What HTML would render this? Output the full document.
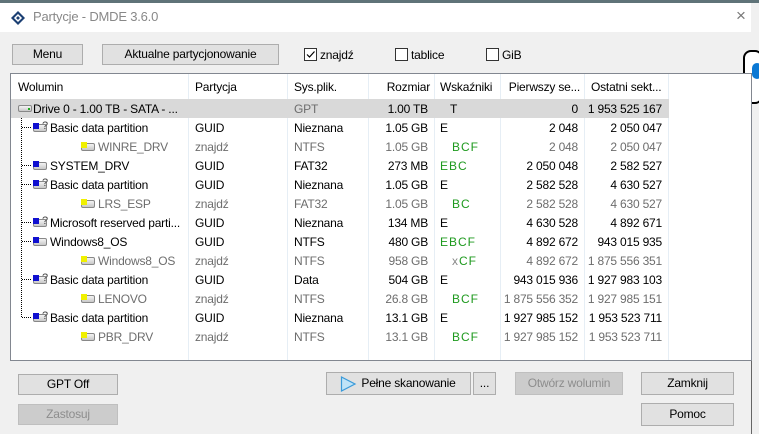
<!DOCTYPE html>
<html><head><meta charset="utf-8"><style>
*{margin:0;padding:0;box-sizing:border-box}
body{width:759px;height:434px;overflow:hidden;background:#f0f0f0;font-family:"Liberation Sans",sans-serif;font-size:12px;color:#000;position:relative;letter-spacing:-0.2px}
.a{position:absolute;white-space:nowrap}
.btn{position:absolute;background:#e1e1e1;border:1px solid #adadad;text-align:center;font-size:12px}
.dis{color:#8d8d8d;background:#cccccc;border-color:#bfbfbf}
.cb{position:absolute;width:13px;height:13px;border:1px solid #333;background:#fff}
.col{position:absolute;top:74px;height:286px;border-right:1px solid #e6eef5}
.g{color:#6d6d6d}
.gr{color:#1e9a1e;letter-spacing:1px}
.ic{position:absolute;width:14px;height:8px;border:1px solid #888;border-radius:2px;background:linear-gradient(#f4f4f4,#c8c8c8)}
.sq{position:absolute;width:6px;height:6px}
</style></head><body>
<div class="a" style="left:0;top:0;width:759px;height:3px;background:#5f7378"></div>
<div class="a" style="left:0;top:3px;width:751px;height:29px;background:#fff"></div>
<svg class="a" style="left:10px;top:10px" width="16" height="16"><rect x="0" y="0" width="16" height="16" fill="#fff"/><path d="M8 1 L15 8 L8 15 L1 8Z" fill="#1b3f73"/><path d="M5 8 L8 5 L11 8 L8 11Z" fill="none" stroke="#fff" stroke-width="1.5"/></svg>
<div class="a" style="left:33px;top:9px;font-size:13px;color:#888">Partycje - DMDE 3.6.0</div>
<div class="a" style="left:736px;top:6px;font-size:17px;color:#777">×</div>
<div class="a" style="left:751px;top:32px;width:8px;height:402px;background:#f0f0f0"></div>
<div class="a" style="left:751px;top:104px;width:1px;height:330px;background:#666"></div>
<div class="a" style="left:743px;top:50px;width:20px;height:54px;border:2px solid #000;border-radius:8px;background:#fff"></div>
<div class="a" style="left:752px;top:63px;width:10px;height:16px;border-radius:8px;background:#0a78d4"></div>

<div class="btn" style="left:12px;top:44px;width:71px;height:21px;line-height:19px">Menu</div>
<div class="btn" style="left:102px;top:44px;width:177px;height:21px;line-height:19px">Aktualne partycjonowanie</div>
<div class="cb" style="left:304px;top:48px"></div>
<svg class="a" style="left:305px;top:49px" width="11" height="11"><path d="M2 5.5 L4.5 8 L9.5 2.5" stroke="#000" fill="none" stroke-width="1.2"/></svg>
<div class="a" style="left:320px;top:48px">znajdź</div>
<div class="cb" style="left:395px;top:48px"></div>
<div class="a" style="left:411px;top:48px">tablice</div>
<div class="cb" style="left:486px;top:48px"></div>
<div class="a" style="left:502px;top:48px">GiB</div>

<div class="a" style="left:10px;top:73px;width:742px;height:288px;background:#fff;border:1px solid #828790"></div>
<div class="col" style="left:11px;width:178px"></div>
<div class="col" style="left:189px;width:99px"></div>
<div class="col" style="left:288px;width:81px"></div>
<div class="col" style="left:369px;width:66px"></div>
<div class="col" style="left:435px;width:66px"></div>
<div class="col" style="left:501px;width:84px"></div>
<div class="col" style="left:585px;width:84px"></div>
<div class="a" style="left:11px;top:99px;width:658px;height:19px;background:#d9d9d9"></div>
<div class="a" style="left:21px;top:118px;height:199px;border-left:1px dotted #000"></div>

<div id="tbl"></div>
<script>
var H=[["Wolumin",18,0],["Partycja",195,0],["Sys.plik.",294,0],["Rozmiar",430,1],["Wskaźniki",440,0],["Pierwszy se...",580,1],["Ostatni sekt...",591,0]];
var s="";
H.forEach(function(h){s+='<div class="a" style="'+(h[2]?'right:'+(759-h[1])+'px':'left:'+h[1]+'px')+';top:80px">'+h[0]+'</div>'});
var R=[
[0,"Drive 0 - 1.00 TB - SATA - ...","","GPT","1.00 TB","T","0","1 953 525 167"],
[1,"Basic data partition","GUID","Nieznana","1.05 GB","E","2 048","2 050 047",1],
[2,"WINRE_DRV","znajdź","NTFS","1.05 GB","BCF","2 048","2 050 047"],
[1,"SYSTEM_DRV","GUID","FAT32","273 MB","EBC","2 050 048","2 582 527",0,1],
[1,"Basic data partition","GUID","Nieznana","1.05 GB","E","2 582 528","4 630 527",1],
[2,"LRS_ESP","znajdź","FAT32","1.05 GB","BC","2 582 528","4 630 527"],
[1,"Microsoft reserved parti...","GUID","Nieznana","134 MB","E","4 630 528","4 892 671",1],
[1,"Windows8_OS","GUID","NTFS","480 GB","EBCF","4 892 672","943 015 935",0,1],
[2,"Windows8_OS","znajdź","NTFS","958 GB","xCF","4 892 672","1 875 556 351"],
[1,"Basic data partition","GUID","Data","504 GB","E","943 015 936","1 927 983 103",1],
[2,"LENOVO","znajdź","NTFS","26.8 GB","BCF","1 875 556 352","1 927 985 151"],
[1,"Basic data partition","GUID","Nieznana","13.1 GB","E","1 927 985 152","1 953 523 711",1],
[2,"PBR_DRV","znajdź","NTFS","13.1 GB","BCF","1 927 985 152","1 953 523 711"]];
R.forEach(function(r,i){
 var y=99+i*19,t=y+3,lv=r[0];
 if(lv==0){s+='<div class="ic" style="left:18px;top:'+(y+6)+'px;width:14px;height:7px"></div><div class="sq" style="left:28px;top:'+(y+9)+'px;width:2px;height:2px;background:#2a2"></div>';
  s+='<div class="a" style="left:33px;top:'+t+'px">'+r[1]+'</div>';}
 else if(lv==1){s+='<div class="a" style="left:22px;top:'+(y+9)+'px;width:9px;border-top:1px dotted #000"></div>';
  s+='<div class="ic" style="left:33px;top:'+(y+6)+'px"></div><div class="sq" style="left:33px;top:'+(y+5)+'px;background:#1010d0"></div>';
  if(r[8])s+='<div class="a" style="left:42px;top:'+(t-1)+'px;font-size:11px;color:#444">?</div>';
  s+='<div class="a" style="left:50px;top:'+t+'px">'+r[1]+'</div>';}
 else{s+='<div class="ic" style="left:81px;top:'+(y+6)+'px"></div><div class="sq" style="left:81px;top:'+(y+5)+'px;background:#f0f000"></div>';
  s+='<div class="a g" style="left:98px;top:'+t+'px">'+r[1]+'</div>';}
 var g2=(lv==2||lv==0)?' g':'';
 s+='<div class="a'+(lv==2?' g':'')+'" style="left:195px;top:'+t+'px">'+r[2]+'</div>';
 s+='<div class="a'+g2+'" style="left:294px;top:'+t+'px">'+r[3]+'</div>';
 s+='<div class="a'+(lv==2?' g':'')+'" style="right:'+(759-428)+'px;top:'+t+'px">'+r[4]+'</div>';
 var w=r[5],green=(lv==2||r[9]);
 if(w=="xCF")w='<span style="color:#888">x</span>CF';
 s+='<div class="a'+(green?' gr':'')+'" style="left:'+(lv==2?452:(lv==0?450:440))+'px;top:'+t+'px">'+w+'</div>';
 s+='<div class="a'+(lv==2?' g':'')+'" style="right:'+(759-578)+'px;top:'+t+'px">'+r[6]+'</div>';
 s+='<div class="a'+(lv==2?' g':'')+'" style="right:'+(759-662)+'px;top:'+t+'px">'+r[7]+'</div>';
});
document.getElementById('tbl').innerHTML=s;
</script>

<div class="btn" style="left:18px;top:374px;width:100px;height:21px;line-height:19px">GPT Off</div>
<div class="btn dis" style="left:18px;top:404px;width:100px;height:21px;line-height:19px">Zastosuj</div>
<div class="btn" style="left:326px;top:372px;width:145px;height:23px;line-height:21px;padding-left:20px">Pełne skanowanie</div>
<svg class="a" style="left:340px;top:376px" width="17" height="16"><path d="M1.5 1 L15 8 L1.5 15Z" fill="#bfe3f7" stroke="#3a9ad9" stroke-width="1.2"/></svg>
<div class="btn" style="left:473px;top:372px;width:23px;height:23px;line-height:21px">...</div>
<div class="btn dis" style="left:515px;top:372px;width:108px;height:23px;line-height:21px">Otwórz wolumin</div>
<div class="btn" style="left:641px;top:372px;width:93px;height:23px;line-height:21px">Zamknij</div>
<div class="btn" style="left:641px;top:403px;width:93px;height:23px;line-height:21px">Pomoc</div>
</body></html>
